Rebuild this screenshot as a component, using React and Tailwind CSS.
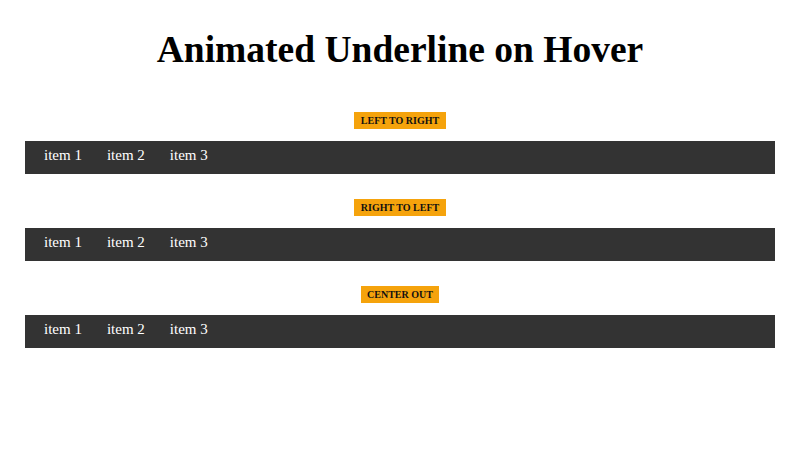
export default function App() {
  const sections = ["Left to Right", "Right to Left", "Center Out"];
  return (
    <div className="w-[800px] h-[450px] bg-white" style={{ fontFamily: '"Liberation Serif", serif' }}>
      <h1 className="pt-[27px] text-center text-[37.5px] leading-[46px] font-bold text-black">
        Animated Underline on Hover
      </h1>
      <div className="mt-[39px] flex flex-col gap-[25px] px-[25px]">
        {sections.map((s) => (
          <section key={s} className="flex flex-col items-center">
            <span className="bg-[#f5a30c] px-[6.5px] h-[17px] leading-[18px] text-[10px] font-bold uppercase text-[#111]">
              {s}
            </span>
            <nav className="mt-[12px] w-full h-[33px] bg-[#333333] flex items-center pb-[4px] pl-[19px] gap-[25px]">
              {["item 1", "item 2", "item 3"].map((i) => (
                <a key={i} className="text-[15px] text-white leading-none">
                  {i}
                </a>
              ))}
            </nav>
          </section>
        ))}
      </div>
    </div>
  );
}
